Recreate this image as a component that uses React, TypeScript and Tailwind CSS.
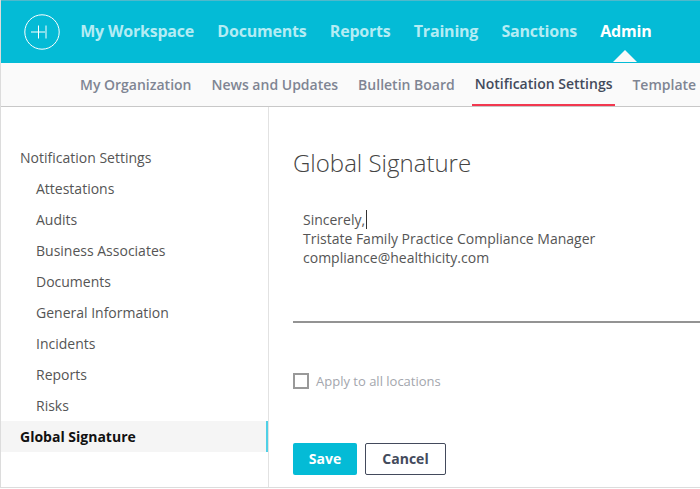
export default function App() {
  const top = ["My Workspace", "Documents", "Reports", "Training", "Sanctions"];
  const sub = ["My Organization", "News and Updates", "Bulletin Board"];
  const side = ["Attestations", "Audits", "Business Associates", "Documents", "General Information", "Incidents", "Reports", "Risks"];
  return (
    <div className="h-[489px] w-[700px] overflow-hidden bg-white font-['Open_Sans',sans-serif]">
      <div className="flex h-[488px] flex-col border-b border-l border-[#dcdcdc]">
        <header className="flex h-[63px] shrink-0 items-center gap-[23.2px] border-t border-[#4fb9cc] bg-[#04bbd6] pb-[2px] pl-[23px]">
          <svg width="36" height="36" viewBox="0 0 36 36" fill="none" stroke="white" className="mr-[-3px] mt-[2px] shrink-0">
            <circle cx="18" cy="18" r="17.2" strokeWidth="1" />
            <path d="M7 18H21M14.5 11.5V24.5M22 11.5V24.5" strokeWidth="1" />
          </svg>
          {top.map((t) => (
            <span key={t} className="text-base font-bold tracking-[-0.2px] text-[#b4ecf4]">{t}</span>
          ))}
          <span className="relative text-base font-bold tracking-[-0.2px] text-white">
            Admin
            <span className="absolute left-[13px] top-[31px] h-0 w-0 border-x-[12px] border-b-[12px] border-x-transparent border-b-[#fafafa]" />
          </span>
        </header>
        <nav className="flex h-[44px] shrink-0 items-stretch gap-[20px] overflow-hidden border-b border-[#c8c8c8] bg-[#fafafa] pl-[79px] text-sm font-semibold whitespace-nowrap text-[#7f8593]">
          {sub.map((s) => (
            <span key={s} className="pt-[12px]">{s}</span>
          ))}
          <span className="ml-[-3px] border-b-2 border-[#f2384f] px-[3px] pt-[11px] text-[#434a5c]">Notification Settings</span>
          <span className="ml-[-3px] pt-[12px]">Template</span>
        </nav>
        <div className="flex min-h-0 flex-1">
          <aside className="w-[268px] shrink-0 border-r border-[#e2e2e2] pt-[35px] text-sm text-[#555555]">
            <div className="flex h-[31px] items-center pl-[19px]">Notification Settings</div>
            {side.map((s) => (
              <div key={s} className="flex h-[31px] items-center pl-[35px]">{s}</div>
            ))}
            <div className="flex h-[31px] items-center border-r-2 border-[#4fd0e6] bg-[#f5f5f5] pl-[19px] font-bold text-[#111111]">Global Signature</div>
          </aside>
          <main className="min-w-0 flex-1 pl-[24px] pt-[41px]">
            <h1 className="text-2xl leading-[30px] font-light text-[#444444]">Global Signature</h1>
            <div className="mt-[32px] h-[113px] border-b-2 border-[#939393] pl-[10px] text-sm leading-[19px] text-[#555555]">
              <div>Sincerely,<span className="ml-px inline-block h-[19px] w-px bg-[#333333] align-top" /></div>
              <div>Tristate Family Practice Compliance Manager</div>
              <div>compliance@healthicity.com</div>
            </div>
            <label className="mt-[49px] flex items-center gap-[7px] text-[13px] leading-[18px] text-[#a3a6ad]">
              <span className="h-4 w-4 border-2 border-[#999999] bg-white" />
              Apply to all locations
            </label>
            <div className="mt-[53px] flex gap-2">
              <button className="h-8 w-16 rounded-[2px] bg-[#04bbd6] text-sm font-bold text-white">Save</button>
              <button className="h-8 w-[81px] rounded-[2px] border border-[#434a5c] bg-white text-sm font-bold text-[#434a5c]">Cancel</button>
            </div>
          </main>
        </div>
      </div>
    </div>
  );
}
